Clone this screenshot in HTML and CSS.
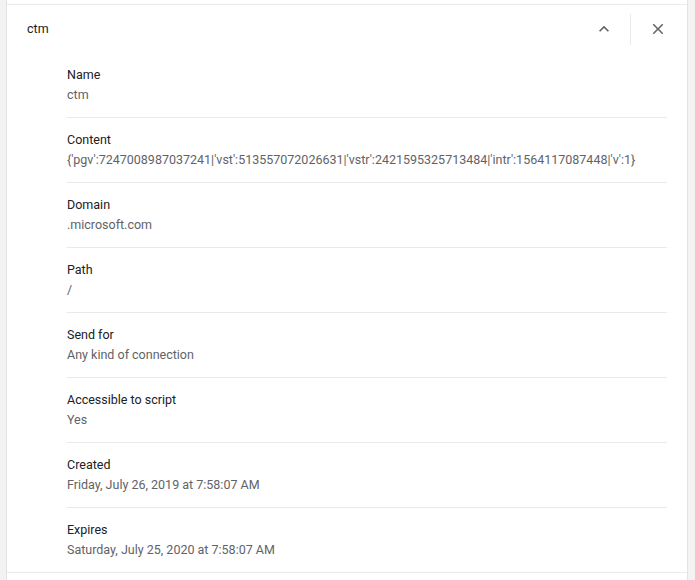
FILE: index.html
```html
<!DOCTYPE html>
<html>
<head>
<meta charset="utf-8">
<link rel="stylesheet" href="styles.css">
</head>
<body>
<div class="panel">
  <div class="section">
    <div class="header">
      <div class="title">ctm</div>
      <button class="icon-btn" aria-label="Collapse">
        <svg viewBox="0 0 24 24" width="20" height="20"><path d="M12 8l-6 6 1.41 1.41L12 10.83l4.59 4.58L18 14z"/></svg>
      </button>
      <div class="vsep"></div>
      <button class="icon-btn" aria-label="Remove">
        <svg viewBox="0 0 24 24" width="18" height="18"><path d="M19 6.41L17.59 5 12 10.59 6.41 5 5 6.41 10.59 12 5 17.59 6.41 19 12 13.41 17.59 19 19 17.59 13.41 12z"/></svg>
      </button>
    </div>
    <div class="rows">
      <div class="row"><div class="label">Name</div><div class="value">ctm</div></div>
      <div class="row"><div class="label">Content</div><div class="value">{'pgv':7247008987037241|'vst':513557072026631|'vstr':2421595325713484|'intr':1564117087448|'v':1}</div></div>
      <div class="row"><div class="label">Domain</div><div class="value">.microsoft.com</div></div>
      <div class="row"><div class="label">Path</div><div class="value">/</div></div>
      <div class="row"><div class="label">Send for</div><div class="value">Any kind of connection</div></div>
      <div class="row"><div class="label">Accessible to script</div><div class="value">Yes</div></div>
      <div class="row"><div class="label">Created</div><div class="value">Friday, July 26, 2019 at 7:58:07 AM</div></div>
      <div class="row"><div class="label">Expires</div><div class="value">Saturday, July 25, 2020 at 7:58:07 AM</div></div>
    </div>
  </div>
</div>
</body>
</html>
```
FILE: styles.css
```css
html, body {
  margin: 0;
  padding: 0;
  height: 100%;
}
body {
  background: #f3f3f3;
  font-family: Roboto, "Liberation Sans", sans-serif;
  font-size: 12.5px;
  color: #202124;
  overflow: hidden;
}
.panel {
  margin: 0 7px 0 6px;
  border-left: 1px solid #e3e3e3;
  border-right: 1px solid #e3e3e3;
  background: #fff;
  height: 580px;
  padding-top: 4px;
  box-sizing: border-box;
}
.section {
  border-top: 1px solid #e8eaed;
  border-bottom: 1px solid #e8eaed;
}
.header {
  display: flex;
  align-items: center;
  height: 48px;
  padding: 0 9px 0 20px;
}
.title {
  flex: 1;
  line-height: 20px;
}
.icon-btn {
  width: 40px;
  height: 32px;
  border: 0;
  padding: 0;
  background: transparent;
  display: flex;
  align-items: center;
  justify-content: center;
  fill: #5f6368;
}
.vsep {
  width: 1px;
  height: 31px;
  background: #e8eaed;
  margin: 0 7px 0 6px;
}
.rows {
  padding: 0 20px 0 60px;
}
.row {
  padding: 12px 0 12px;
  border-bottom: 1px solid #e8eaed;
}
.row:last-child {
  border-bottom: 0;
}
.label {
  line-height: 20px;
  color: #202124;
}
.value {
  line-height: 20px;
  color: #5f6368;
}
```
